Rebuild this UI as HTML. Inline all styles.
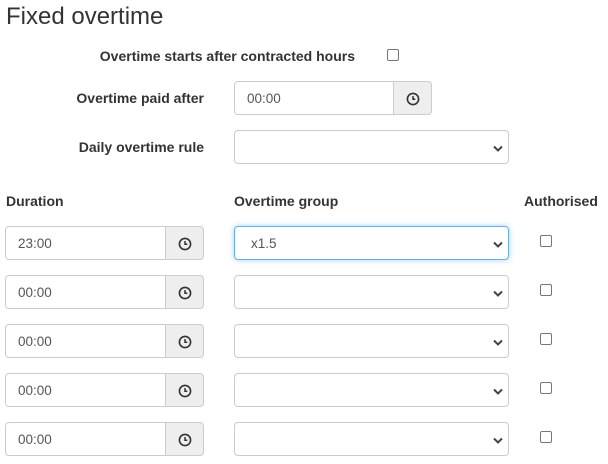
<!DOCTYPE html>
<html><head><style>
*{box-sizing:border-box;margin:0;padding:0}
body{width:608px;height:464px;background:#fff;font-family:"Liberation Sans",Arial,sans-serif;color:#333;position:relative;overflow:hidden}
h1{position:absolute;left:6px;top:3px;font-size:24px;font-weight:normal;color:#333}
.lbl{position:absolute;font-size:14px;font-weight:bold;color:#333;white-space:nowrap}
.r{text-align:right}
.inp{position:absolute;height:34px;border:1px solid #ccc;border-radius:4px;background:#fff;font-size:13.5px;color:#555;padding:9px 0 0 12px}
.add{position:absolute;height:34px;border:1px solid #ccc;border-radius:0 4px 4px 0;background:#eee}
.add svg{position:absolute;left:12px;top:10px}
.sel{position:absolute;height:34px;border:1px solid #ccc;border-radius:4px;background:#fff;font-size:13.5px;color:#555;padding:9px 0 0 16px}
.sel svg{position:absolute;right:5px;top:14px}
.cb{position:absolute;width:12px;height:12px;border:1px solid #767676;border-radius:2px;background:#fff}
.focus{border-color:#66afe9;box-shadow:0 0 6px rgba(102,175,233,.6)}
</style></head><body>
<h1>Fixed overtime</h1>
<div class="lbl r" style="right:253px;top:48px">Overtime starts after contracted hours</div>
<div class="cb" style="left:387px;top:49px"></div>
<div class="lbl r" style="right:404px;top:90px">Overtime paid after</div>
<div class="inp" style="left:234px;top:81px;width:160px;border-radius:4px 0 0 4px">00:00</div>
<div class="add" style="left:393px;top:81px;width:39px"><svg width="14" height="14" viewBox="0 0 14 14"><circle cx="7" cy="7" r="5.6" fill="none" stroke="#333" stroke-width="1.6"/><path d="M7 4v3.3h2.3" fill="none" stroke="#333" stroke-width="1.5"/></svg></div>
<div class="lbl r" style="right:404px;top:139px">Daily overtime rule</div>
<div class="sel" style="left:234px;top:130px;width:275px"><svg width="10" height="7" viewBox="0 0 10 7"><path d="M1 1.5l4 4 4-4" fill="none" stroke="#444" stroke-width="2"/></svg></div>
<div class="lbl" style="left:6px;top:193px">Duration</div>
<div class="lbl" style="left:234px;top:193px">Overtime group</div>
<div class="lbl" style="left:524px;top:193px">Authorised</div>

<div id="rows"></div>
<script>
var h='';var ys=[226,275,324,373,422];
ys.forEach(function(y,i){
h+='<div class="inp" style="left:5px;top:'+y+'px;width:161px;border-radius:4px 0 0 4px">'+(i==0?'23:00':'00:00')+'</div>';
h+='<div class="add" style="left:165px;top:'+y+'px;width:39px"><svg width="14" height="14" viewBox="0 0 14 14"><circle cx="7" cy="7" r="5.6" fill="none" stroke="#333" stroke-width="1.6"/><path d="M7 4v3.3h2.3" fill="none" stroke="#333" stroke-width="1.5"/></svg></div>';
h+='<div class="sel'+(i==0?' focus':'')+'" style="left:234px;top:'+y+'px;width:275px">'+(i==0?'x1.5':'')+'<svg width="10" height="7" viewBox="0 0 10 7"><path d="M1 1.5l4 4 4-4" fill="none" stroke="#444" stroke-width="2"/></svg></div>';
h+='<div class="cb" style="left:540px;top:'+(y+9)+'px"></div>';
});
document.getElementById('rows').innerHTML=h;
</script>
</body></html>
